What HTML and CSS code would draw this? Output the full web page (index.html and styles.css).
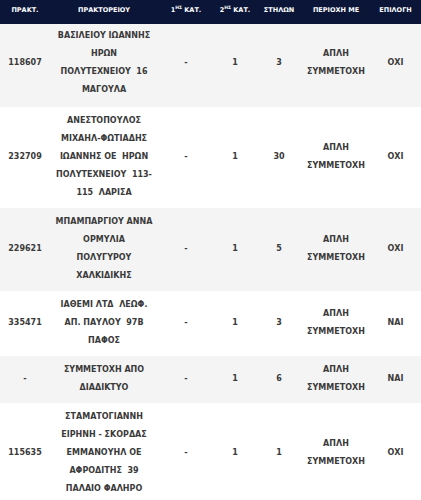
FILE: index.html
```html
<!DOCTYPE html>
<html lang="el">
<head>
<meta charset="utf-8">
<link rel="stylesheet" href="styles.css">
</head>
<body>
<table class="results">
  <colgroup>
    <col class="c1"><col class="c2"><col class="c3"><col class="c4"><col class="c5"><col class="c6"><col class="c7">
  </colgroup>
  <thead>
    <tr>
      <th>ΠΡΑΚΤ.</th>
      <th>ΠΡΑΚΤΟΡΕΙΟΥ</th>
      <th>1<sup>ΗΣ</sup> ΚΑΤ.</th>
      <th>2<sup>ΗΣ</sup> ΚΑΤ.</th>
      <th>ΣΤΗΛΩΝ</th>
      <th>ΠΕΡΙΟΧΗ ΜΕ</th>
      <th>ΕΠΙΛΟΓΗ</th>
    </tr>
  </thead>
  <tbody>
    <tr class="first">
      <td>118607</td>
      <td>ΒΑΣΙΛΕΙΟΥ ΙΩΑΝΝΗΣ<br>ΗΡΩΝ<br>ΠΟΛΥΤΕΧΝΕΙΟΥ&nbsp; 16<br>ΜΑΓΟΥΛΑ</td>
      <td>-</td>
      <td>1</td>
      <td>3</td>
      <td>ΑΠΛΗ<br>ΣΥΜΜΕΤΟΧΗ</td>
      <td>ΟΧΙ</td>
    </tr>
    <tr>
      <td>232709</td>
      <td>ΑΝΕΣΤΟΠΟΥΛΟΣ<br>ΜΙΧΑΗΛ-ΦΩΤΙΑΔΗΣ<br>ΙΩΑΝΝΗΣ ΟΕ&nbsp; ΗΡΩΝ<br>ΠΟΛΥΤΕΧΝΕΙΟΥ&nbsp; 113-<br>115&nbsp; ΛΑΡΙΣΑ</td>
      <td>-</td>
      <td>1</td>
      <td>30</td>
      <td>ΑΠΛΗ<br>ΣΥΜΜΕΤΟΧΗ</td>
      <td>ΟΧΙ</td>
    </tr>
    <tr>
      <td>229621</td>
      <td>ΜΠΑΜΠΑΡΓΙΟΥ ΑΝΝΑ<br>ΟΡΜΥΛΙΑ<br>ΠΟΛΥΓΥΡΟΥ<br>ΧΑΛΚΙΔΙΚΗΣ</td>
      <td>-</td>
      <td>1</td>
      <td>5</td>
      <td>ΑΠΛΗ<br>ΣΥΜΜΕΤΟΧΗ</td>
      <td>ΟΧΙ</td>
    </tr>
    <tr>
      <td>335471</td>
      <td>ΙΑΘΕΜΙ ΛΤΔ&nbsp; ΛΕΩΦ.<br>ΑΠ. ΠΑΥΛΟΥ&nbsp; 97Β<br>ΠΑΦΟΣ</td>
      <td>-</td>
      <td>1</td>
      <td>3</td>
      <td>ΑΠΛΗ<br>ΣΥΜΜΕΤΟΧΗ</td>
      <td>ΝΑΙ</td>
    </tr>
    <tr>
      <td>-</td>
      <td>ΣΥΜΜΕΤΟΧΗ ΑΠΟ<br>ΔΙΑΔΙΚΤΥΟ</td>
      <td>-</td>
      <td>1</td>
      <td>6</td>
      <td>ΑΠΛΗ<br>ΣΥΜΜΕΤΟΧΗ</td>
      <td>ΝΑΙ</td>
    </tr>
    <tr>
      <td>115635</td>
      <td>ΣΤΑΜΑΤΟΓΙΑΝΝΗ<br>ΕΙΡΗΝΗ - ΣΚΟΡΔΑΣ<br>ΕΜΜΑΝΟΥΗΛ ΟΕ<br>ΑΦΡΟΔΙΤΗΣ&nbsp; 39<br>ΠΑΛΑΙΟ ΦΑΛΗΡΟ</td>
      <td>-</td>
      <td>1</td>
      <td>1</td>
      <td>ΑΠΛΗ<br>ΣΥΜΜΕΤΟΧΗ</td>
      <td>ΟΧΙ</td>
    </tr>
  </tbody>
</table>
</body>
</html>
```
FILE: styles.css
```css
html, body {
  margin: 0;
  padding: 0;
  background: #ffffff;
}

.results {
  width: 421px;
  border-collapse: collapse;
  table-layout: fixed;
  font-family: "DejaVu Sans", Verdana, sans-serif;
  font-weight: bold;
}

.c1 { width: 50px; }
.c2 { width: 108px; }
.c3 { width: 56px; }
.c4 { width: 42px; }
.c5 { width: 46px; }
.c6 { width: 68px; }
.c7 { width: 51px; }

.results th {
  background: #0b1538;
  color: #ffffff;
  font-size: 6.5px;
  line-height: 8px;
  padding: 6px 0 10px;
  text-align: center;
  white-space: nowrap;
  font-weight: bold;
}

.results th sup {
  font-size: 4.5px;
  line-height: 0;
  vertical-align: 3px;
}

.results td {
  font-size: 8px;
  line-height: 18px;
  color: #3a3a3a;
  text-align: center;
  vertical-align: middle;
  padding: 5px 0 6px;
}

.results tbody tr:nth-child(odd) {
  background: #f4f4f4;
}

.results tbody tr.first td {
  padding: 3px 0 8px;
}
```
